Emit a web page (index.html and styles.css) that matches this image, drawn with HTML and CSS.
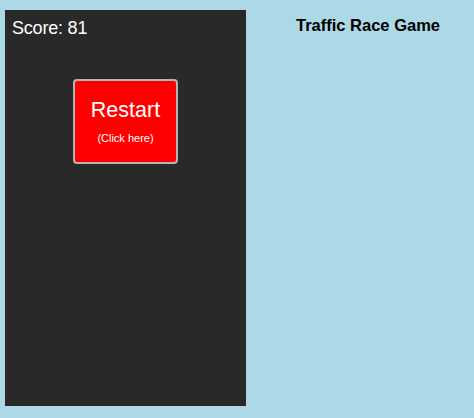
FILE: index.html
```html
<!DOCTYPE html>
<html>
<head>
<meta charset="utf-8">
<link rel="stylesheet" href="styles.css">
</head>
<body>
<div class="page">
  <div class="game">
    <div class="score">Score: 81</div>
    <div class="restart">
      <div class="restart-title">Restart</div>
      <div class="restart-sub">(Click here)</div>
    </div>
  </div>
  <div class="side">
    <div class="title">Traffic Race Game</div>
  </div>
</div>
</body>
</html>
```
FILE: styles.css
```css
html, body {
  margin: 0;
  padding: 0;
  background: #add8e6;
  font-family: "Liberation Sans", Arial, sans-serif;
}
.page {
  display: flex;
  align-items: flex-start;
  width: 474px;
  height: 418px;
}
.game {
  position: relative;
  margin-left: 5px;
  margin-top: 10px;
  width: 241px;
  height: 396px;
  background: #292929;
  box-sizing: border-box;
  padding: 9px 0 0 7px;
}
.score {
  color: #ffffff;
  font-size: 18px;
  line-height: 18px;
  letter-spacing: -0.2px;
}
.restart {
  position: absolute;
  left: 68px;
  top: 69px;
  width: 105px;
  height: 85px;
  box-sizing: border-box;
  border: 2px solid #b4b4b4;
  border-radius: 4px;
  background: #ff0000;
  color: #ffffff;
  text-align: center;
  padding-top: 18px;
}
.restart-title {
  font-size: 21.5px;
  line-height: 22px;
}
.restart-sub {
  margin-top: 12px;
  font-size: 11px;
  line-height: 11px;
}
.side {
  flex: 1;
  padding-left: 16px;
  padding-top: 17px;
  text-align: center;
}
.title {
  font-size: 16.5px;
  line-height: 16px;
  font-weight: bold;
  color: #000000;
}
```
